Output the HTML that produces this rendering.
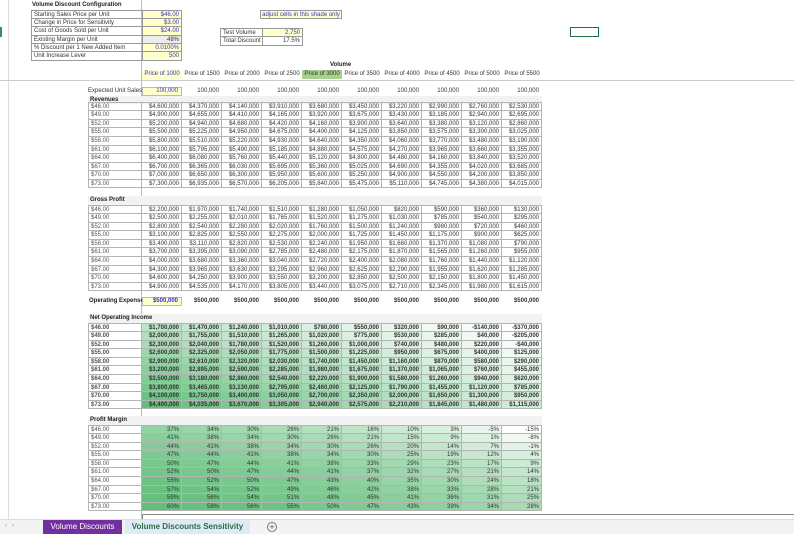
<!DOCTYPE html>
<html><head><meta charset="utf-8"><style>
*{margin:0;padding:0;box-sizing:border-box}
body{width:794px;height:534px;overflow:hidden;background:#fff;font-family:"Liberation Sans",sans-serif;font-size:6px;color:#333;position:relative}
.a{position:absolute;white-space:nowrap}
.g{position:absolute;left:88px;display:grid;grid-template-columns:53px repeat(10,40px);grid-auto-rows:8.55px;border-top:1px solid #b4b4b4;border-left:1px solid #b4b4b4}
.g div{border-right:1px solid #b4b4b4;border-bottom:1px solid #b4b4b4;line-height:8.6px;text-align:right;padding-right:2px;overflow:hidden;white-space:nowrap}
.g div.l{text-align:left;padding-left:2px;color:#555}
.b div{font-weight:bold}
.hd{position:absolute;left:88px;width:454px;height:8.5px;background:#f2f2f2;font-weight:bold;line-height:9px;padding-left:2px;color:#222}
.cfg{position:absolute;left:31px;top:9.5px;display:grid;grid-template-columns:111px 39px;grid-auto-rows:8.4px;border-top:1px solid #999;border-left:1px solid #999}
.cfg div{border-right:1px solid #999;border-bottom:1px solid #999;line-height:8.4px;padding:0 2px;white-space:nowrap;overflow:hidden}
.y{background:#ffffcc;color:#3333cc;text-align:right}
.hrow{position:absolute;top:70px;left:142px;display:grid;grid-template-columns:repeat(10,40px);height:8.5px;line-height:9px}
.hrow div{text-align:center}
</style></head><body>
<div class="a" style="left:8px;top:0;width:1px;height:520px;background:#ddd"></div>
<div class="a" style="left:0;top:27px;width:2px;height:10px;background:#3a8a5a"></div>
<div class="a" style="left:141px;top:0;width:1px;height:520px;background:#bbb"></div>
<div class="a" style="left:0;top:80px;width:794px;height:1px;background:#ccc"></div>
<div class="a" style="left:570px;top:27px;width:29px;height:10px;border:1px solid #217346"></div>

<div class="a" style="left:32px;top:2px;font-weight:bold;color:#222">Volume Discount Configuration</div>
<div class="cfg">
<div>Starting Sales Price per Unit</div><div class="y">$46.00</div>
<div>Change in Price for Sensitivity</div><div class="y">$3.00</div>
<div>Cost of Goods Sold per Unit</div><div class="y">$24.00</div>
<div>Existing Margin per Unit</div><div style="background:#ececec;text-align:right">48%</div>
<div>% Discount per 1 New Added Item</div><div class="y">0.0100%</div>
<div>Unit Increase Lever</div><div class="y">500</div>
</div>
<div class="a" style="left:260px;top:10px;width:82px;height:9px;background:#ffffcc;color:#3333cc;border:1px solid #999;line-height:8px;text-align:center">adjust cells in this shade only</div>
<div class="cfg" style="left:220px;top:28px;grid-template-columns:42px 40px">
<div>Test Volume</div><div class="y" style="background:#ffffcc">2,750</div>
<div>Total Discount</div><div style="text-align:right">17.5%</div>
</div>

<div class="a" style="left:330px;top:62px;font-weight:bold;color:#222">Volume</div>
<div class="hrow">
<div style="background:#ffffcc;color:#3333cc">Price of 1000</div><div>Price of 1500</div><div>Price of 2000</div><div>Price of 2500</div><div style="background:#a9d08e">Price of 3000</div><div>Price of 3500</div><div>Price of 4000</div><div>Price of 4500</div><div>Price of 5000</div><div>Price of 5500</div>
</div>

<div class="a" style="left:88px;top:87px;width:53px;text-align:right;line-height:9px">Expected Unit Sales</div>
<div class="hrow" style="top:87px;height:9px;line-height:9px">
<div style="background:#ffffcc;color:#3333cc;border:1px solid #bbb;text-align:right;padding-right:3px;line-height:7px">100,000</div><div style="text-align:right;padding-right:3px">100,000</div><div style="text-align:right;padding-right:3px">100,000</div><div style="text-align:right;padding-right:3px">100,000</div><div style="text-align:right;padding-right:3px">100,000</div><div style="text-align:right;padding-right:3px">100,000</div><div style="text-align:right;padding-right:3px">100,000</div><div style="text-align:right;padding-right:3px">100,000</div><div style="text-align:right;padding-right:3px">100,000</div><div style="text-align:right;padding-right:3px">100,000</div>
</div>

<div class="hd" style="top:95.5px">Revenues</div>
<div class="g" style="top:101.8px">
<div class="l">$46.00</div><div>$4,600,000</div><div>$4,370,000</div><div>$4,140,000</div><div>$3,910,000</div><div>$3,680,000</div><div>$3,450,000</div><div>$3,220,000</div><div>$2,990,000</div><div>$2,760,000</div><div>$2,530,000</div>
<div class="l">$49.00</div><div>$4,900,000</div><div>$4,655,000</div><div>$4,410,000</div><div>$4,165,000</div><div>$3,920,000</div><div>$3,675,000</div><div>$3,430,000</div><div>$3,185,000</div><div>$2,940,000</div><div>$2,695,000</div>
<div class="l">$52.00</div><div>$5,200,000</div><div>$4,940,000</div><div>$4,680,000</div><div>$4,420,000</div><div>$4,160,000</div><div>$3,900,000</div><div>$3,640,000</div><div>$3,380,000</div><div>$3,120,000</div><div>$2,860,000</div>
<div class="l">$55.00</div><div>$5,500,000</div><div>$5,225,000</div><div>$4,950,000</div><div>$4,675,000</div><div>$4,400,000</div><div>$4,125,000</div><div>$3,850,000</div><div>$3,575,000</div><div>$3,300,000</div><div>$3,025,000</div>
<div class="l">$58.00</div><div>$5,800,000</div><div>$5,510,000</div><div>$5,220,000</div><div>$4,930,000</div><div>$4,640,000</div><div>$4,350,000</div><div>$4,060,000</div><div>$3,770,000</div><div>$3,480,000</div><div>$3,190,000</div>
<div class="l">$61.00</div><div>$6,100,000</div><div>$5,795,000</div><div>$5,490,000</div><div>$5,185,000</div><div>$4,880,000</div><div>$4,575,000</div><div>$4,270,000</div><div>$3,965,000</div><div>$3,660,000</div><div>$3,355,000</div>
<div class="l">$64.00</div><div>$6,400,000</div><div>$6,080,000</div><div>$5,760,000</div><div>$5,440,000</div><div>$5,120,000</div><div>$4,800,000</div><div>$4,480,000</div><div>$4,160,000</div><div>$3,840,000</div><div>$3,520,000</div>
<div class="l">$67.00</div><div>$6,700,000</div><div>$6,365,000</div><div>$6,030,000</div><div>$5,695,000</div><div>$5,360,000</div><div>$5,025,000</div><div>$4,690,000</div><div>$4,355,000</div><div>$4,020,000</div><div>$3,685,000</div>
<div class="l">$70.00</div><div>$7,000,000</div><div>$6,650,000</div><div>$6,300,000</div><div>$5,950,000</div><div>$5,600,000</div><div>$5,250,000</div><div>$4,900,000</div><div>$4,550,000</div><div>$4,200,000</div><div>$3,850,000</div>
<div class="l">$73.00</div><div>$7,300,000</div><div>$6,935,000</div><div>$6,570,000</div><div>$6,205,000</div><div>$5,840,000</div><div>$5,475,000</div><div>$5,110,000</div><div>$4,745,000</div><div>$4,380,000</div><div>$4,015,000</div>
</div>

<div class="hd" style="top:196.2px">Gross Profit</div>
<div class="g" style="top:204.7px">
<div class="l">$46.00</div><div>$2,200,000</div><div>$1,970,000</div><div>$1,740,000</div><div>$1,510,000</div><div>$1,280,000</div><div>$1,050,000</div><div>$820,000</div><div>$590,000</div><div>$360,000</div><div>$130,000</div>
<div class="l">$49.00</div><div>$2,500,000</div><div>$2,255,000</div><div>$2,010,000</div><div>$1,765,000</div><div>$1,520,000</div><div>$1,275,000</div><div>$1,030,000</div><div>$785,000</div><div>$540,000</div><div>$295,000</div>
<div class="l">$52.00</div><div>$2,800,000</div><div>$2,540,000</div><div>$2,280,000</div><div>$2,020,000</div><div>$1,760,000</div><div>$1,500,000</div><div>$1,240,000</div><div>$980,000</div><div>$720,000</div><div>$460,000</div>
<div class="l">$55.00</div><div>$3,100,000</div><div>$2,825,000</div><div>$2,550,000</div><div>$2,275,000</div><div>$2,000,000</div><div>$1,725,000</div><div>$1,450,000</div><div>$1,175,000</div><div>$900,000</div><div>$625,000</div>
<div class="l">$58.00</div><div>$3,400,000</div><div>$3,110,000</div><div>$2,820,000</div><div>$2,530,000</div><div>$2,240,000</div><div>$1,950,000</div><div>$1,660,000</div><div>$1,370,000</div><div>$1,080,000</div><div>$790,000</div>
<div class="l">$61.00</div><div>$3,700,000</div><div>$3,395,000</div><div>$3,090,000</div><div>$2,785,000</div><div>$2,480,000</div><div>$2,175,000</div><div>$1,870,000</div><div>$1,565,000</div><div>$1,260,000</div><div>$955,000</div>
<div class="l">$64.00</div><div>$4,000,000</div><div>$3,680,000</div><div>$3,360,000</div><div>$3,040,000</div><div>$2,720,000</div><div>$2,400,000</div><div>$2,080,000</div><div>$1,760,000</div><div>$1,440,000</div><div>$1,120,000</div>
<div class="l">$67.00</div><div>$4,300,000</div><div>$3,965,000</div><div>$3,630,000</div><div>$3,295,000</div><div>$2,960,000</div><div>$2,625,000</div><div>$2,290,000</div><div>$1,955,000</div><div>$1,620,000</div><div>$1,285,000</div>
<div class="l">$70.00</div><div>$4,600,000</div><div>$4,250,000</div><div>$3,900,000</div><div>$3,550,000</div><div>$3,200,000</div><div>$2,850,000</div><div>$2,500,000</div><div>$2,150,000</div><div>$1,800,000</div><div>$1,450,000</div>
<div class="l">$73.00</div><div>$4,900,000</div><div>$4,535,000</div><div>$4,170,000</div><div>$3,805,000</div><div>$3,440,000</div><div>$3,075,000</div><div>$2,710,000</div><div>$2,345,000</div><div>$1,980,000</div><div>$1,615,000</div>
</div>

<div class="a" style="left:89px;top:297px;font-weight:bold;line-height:9px;color:#222">Operating Expense</div>
<div class="hrow" style="top:297px;height:9px;line-height:9px;font-weight:bold">
<div style="background:#ffffcc;color:#3333cc;border:1px solid #bbb;text-align:right;padding-right:3px;line-height:7px">$500,000</div><div style="text-align:right;padding-right:3px">$500,000</div><div style="text-align:right;padding-right:3px">$500,000</div><div style="text-align:right;padding-right:3px">$500,000</div><div style="text-align:right;padding-right:3px">$500,000</div><div style="text-align:right;padding-right:3px">$500,000</div><div style="text-align:right;padding-right:3px">$500,000</div><div style="text-align:right;padding-right:3px">$500,000</div><div style="text-align:right;padding-right:3px">$500,000</div><div style="text-align:right;padding-right:3px">$500,000</div>
</div>

<div class="hd" style="top:314.2px">Net Operating Income</div>
<div class="g b heat" style="top:322.7px">
<div class="l">$46.00</div><div>$1,700,000</div><div>$1,470,000</div><div>$1,240,000</div><div>$1,010,000</div><div>$780,000</div><div>$550,000</div><div>$320,000</div><div>$90,000</div><div>-$140,000</div><div>-$370,000</div>
<div class="l">$49.00</div><div>$2,000,000</div><div>$1,755,000</div><div>$1,510,000</div><div>$1,265,000</div><div>$1,020,000</div><div>$775,000</div><div>$530,000</div><div>$285,000</div><div>$40,000</div><div>-$205,000</div>
<div class="l">$52.00</div><div>$2,300,000</div><div>$2,040,000</div><div>$1,780,000</div><div>$1,520,000</div><div>$1,260,000</div><div>$1,000,000</div><div>$740,000</div><div>$480,000</div><div>$220,000</div><div>-$40,000</div>
<div class="l">$55.00</div><div>$2,600,000</div><div>$2,325,000</div><div>$2,050,000</div><div>$1,775,000</div><div>$1,500,000</div><div>$1,225,000</div><div>$950,000</div><div>$675,000</div><div>$400,000</div><div>$125,000</div>
<div class="l">$58.00</div><div>$2,900,000</div><div>$2,610,000</div><div>$2,320,000</div><div>$2,030,000</div><div>$1,740,000</div><div>$1,450,000</div><div>$1,160,000</div><div>$870,000</div><div>$580,000</div><div>$290,000</div>
<div class="l">$61.00</div><div>$3,200,000</div><div>$2,895,000</div><div>$2,590,000</div><div>$2,285,000</div><div>$1,980,000</div><div>$1,675,000</div><div>$1,370,000</div><div>$1,065,000</div><div>$760,000</div><div>$455,000</div>
<div class="l">$64.00</div><div>$3,500,000</div><div>$3,180,000</div><div>$2,860,000</div><div>$2,540,000</div><div>$2,220,000</div><div>$1,900,000</div><div>$1,580,000</div><div>$1,260,000</div><div>$940,000</div><div>$620,000</div>
<div class="l">$67.00</div><div>$3,800,000</div><div>$3,465,000</div><div>$3,130,000</div><div>$2,795,000</div><div>$2,460,000</div><div>$2,125,000</div><div>$1,790,000</div><div>$1,455,000</div><div>$1,120,000</div><div>$785,000</div>
<div class="l">$70.00</div><div>$4,100,000</div><div>$3,750,000</div><div>$3,400,000</div><div>$3,050,000</div><div>$2,700,000</div><div>$2,350,000</div><div>$2,000,000</div><div>$1,650,000</div><div>$1,300,000</div><div>$950,000</div>
<div class="l">$73.00</div><div>$4,400,000</div><div>$4,035,000</div><div>$3,670,000</div><div>$3,305,000</div><div>$2,940,000</div><div>$2,575,000</div><div>$2,210,000</div><div>$1,845,000</div><div>$1,480,000</div><div>$1,115,000</div>
</div>

<div class="hd" style="top:416.2px">Profit Margin</div>
<div class="g heat" style="top:424.7px">
<div class="l">$46.00</div><div>37%</div><div>34%</div><div>30%</div><div>26%</div><div>21%</div><div>16%</div><div>10%</div><div>3%</div><div>-5%</div><div>-15%</div>
<div class="l">$49.00</div><div>41%</div><div>38%</div><div>34%</div><div>30%</div><div>26%</div><div>21%</div><div>15%</div><div>9%</div><div>1%</div><div>-8%</div>
<div class="l">$52.00</div><div>44%</div><div>41%</div><div>38%</div><div>34%</div><div>30%</div><div>26%</div><div>20%</div><div>14%</div><div>7%</div><div>-1%</div>
<div class="l">$55.00</div><div>47%</div><div>44%</div><div>41%</div><div>38%</div><div>34%</div><div>30%</div><div>25%</div><div>19%</div><div>12%</div><div>4%</div>
<div class="l">$58.00</div><div>50%</div><div>47%</div><div>44%</div><div>41%</div><div>38%</div><div>33%</div><div>29%</div><div>23%</div><div>17%</div><div>9%</div>
<div class="l">$61.00</div><div>52%</div><div>50%</div><div>47%</div><div>44%</div><div>41%</div><div>37%</div><div>32%</div><div>27%</div><div>21%</div><div>14%</div>
<div class="l">$64.00</div><div>55%</div><div>52%</div><div>50%</div><div>47%</div><div>43%</div><div>40%</div><div>35%</div><div>30%</div><div>24%</div><div>18%</div>
<div class="l">$67.00</div><div>57%</div><div>54%</div><div>52%</div><div>49%</div><div>46%</div><div>42%</div><div>38%</div><div>33%</div><div>28%</div><div>21%</div>
<div class="l">$70.00</div><div>59%</div><div>56%</div><div>54%</div><div>51%</div><div>48%</div><div>45%</div><div>41%</div><div>36%</div><div>31%</div><div>25%</div>
<div class="l">$73.00</div><div>60%</div><div>58%</div><div>56%</div><div>55%</div><div>50%</div><div>47%</div><div>43%</div><div>39%</div><div>34%</div><div>28%</div>
</div>

<div class="a" style="left:142px;top:514px;width:652px;height:8px;border-top:1px solid #888;border-left:1px solid #888"></div>
<div class="a" style="left:0;top:519px;width:794px;height:15px;background:#f3f3f3;border-top:1px solid #ddd"></div>
<div class="a" style="left:5px;top:523px;color:#999;font-size:6px">‹&nbsp;&nbsp;&nbsp;›</div>
<div class="a" style="left:43px;top:520px;width:79px;height:14px;background:#7030a0;color:#fff;font-size:8px;line-height:14px;text-align:center">Volume Discounts</div>
<div class="a" style="left:125px;top:520px;width:125px;height:14px;background:#deebf7;color:#2e6b3f;font-weight:bold;font-size:8px;line-height:14px;text-align:center">Volume Discounts Sensitivity</div>
<div class="a" style="left:267px;top:522px;width:10px;height:10px;border:1px solid #777;border-radius:50%;color:#555;font-size:9px;line-height:8px;text-align:center">+</div>

<script>
document.querySelectorAll('.heat').forEach(function(g){
  var cells=[].slice.call(g.children).filter(function(c){return !c.classList.contains('l')});
  var vals=cells.map(function(c){return parseFloat(c.textContent.replace(/[$,%]/g,''))});
  var mn=Math.min.apply(null,vals),mx=Math.max.apply(null,vals);
  cells.forEach(function(c,i){var t=(vals[i]-mn)/(mx-mn);
    var r=Math.round(255+(99-255)*t),gg=Math.round(255+(190-255)*t),b=Math.round(255+(123-255)*t);
    c.style.background='rgb('+r+','+gg+','+b+')';});
});
</script>
</body></html>
